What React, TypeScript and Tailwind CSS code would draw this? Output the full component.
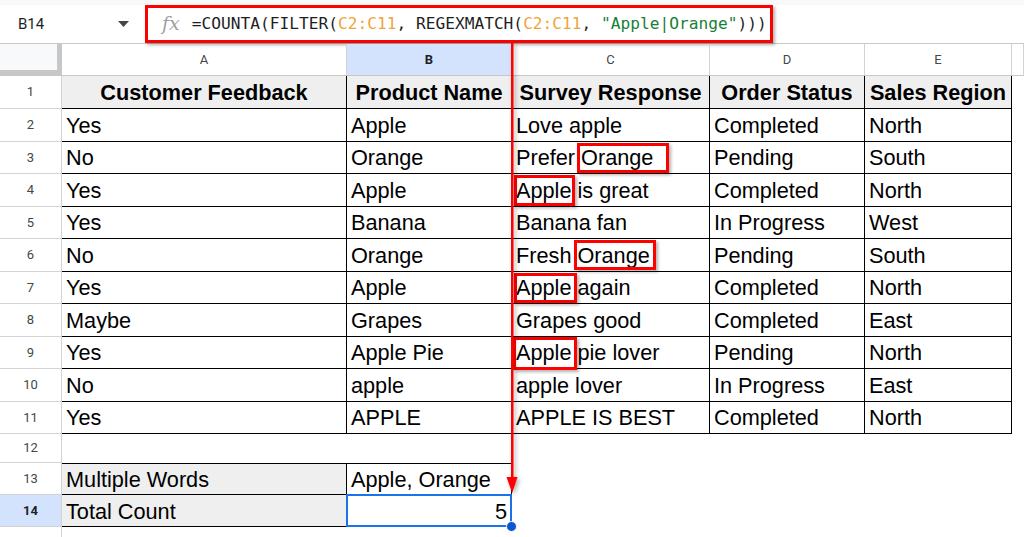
import React from "react";

const COL_W = ["w-[285px]", "w-[165px]", "w-[198px]", "w-[155px]", "w-[147px]"];
const LETTERS = ["A", "B", "C", "D", "E", ""];
const HEAD_W = ["w-[285px]", "w-[165px]", "w-[198px]", "w-[155px]", "w-[147px]", "w-[12px]"];

const HEADERS = ["Customer Feedback", "Product Name", "Survey Response", "Order Status", "Sales Region"];

const ROWS: string[][] = [
  ["Yes", "Apple", "Love apple", "Completed", "North"],
  ["No", "Orange", "Prefer Orange", "Pending", "South"],
  ["Yes", "Apple", "Apple is great", "Completed", "North"],
  ["Yes", "Banana", "Banana fan", "In Progress", "West"],
  ["No", "Orange", "Fresh Orange", "Pending", "South"],
  ["Yes", "Apple", "Apple again", "Completed", "North"],
  ["Maybe", "Grapes", "Grapes good", "Completed", "East"],
  ["Yes", "Apple Pie", "Apple pie lover", "Pending", "North"],
  ["No", "apple", "apple lover", "In Progress", "East"],
  ["Yes", "APPLE", "APPLE IS BEST", "Completed", "North"],
];

// red annotation boxes in column C, keyed by sheet row number
const MARKS: Record<number, string> = {
  3: "left-[65px] top-[1.5px] w-[92px] h-[30px]",
  4: "left-[2px] top-[1px] w-[61px] h-[31px]",
  6: "left-[62px] top-[1px] w-[82px] h-[30px]",
  7: "left-[2px] top-[1.5px] w-[63px] h-[30px]",
  9: "left-[1px] top-[0.5px] w-[64px] h-[33px]",
};

const ROW_H = "h-[32.5px]";
const TXT = "text-[21.7px]";

function RowHead({ n, active = false, h }: { n: number; active?: boolean; h: string }) {
  return (
    <div
      className={`${h} w-[62px] shrink-0 flex items-center justify-center border-r border-b border-[#d3d3d3] text-[13px] ${
        active ? "bg-[#d3e3fd] font-bold text-[#1f1f1f]" : "bg-white text-[#444746]"
      }`}
      style={{ fontFamily: "Roboto, 'Liberation Sans', sans-serif" }}
    >
      {n}
    </div>
  );
}

function Cell({
  w,
  children,
  className = "",
}: {
  w: string;
  children?: React.ReactNode;
  className?: string;
}) {
  return (
    <div className={`${w} shrink-0 relative flex items-center px-[4px] pt-[3px] whitespace-nowrap ${className}`}>
      {children}
    </div>
  );
}

export default function App() {
  return (
    <div
      className="relative w-[1024px] h-[537px] overflow-hidden bg-white text-black"
      style={{ fontFamily: "'Liberation Sans', Arial, sans-serif" }}
    >
      {/* formula bar */}
      <div className="h-[44px] border-b border-[#c7c7c7] flex flex-col">
        <div className="h-[5px] bg-[#f8f9fa]" />
        <div className="h-[38px] flex">
          <div
            className="w-[145px] flex items-center justify-between pl-[18px] pr-[16px] text-[15px] text-[#1f1f1f]"
            style={{ fontFamily: "Roboto, 'Liberation Sans', sans-serif" }}
          >
            <span>B14</span>
            <svg width="11" height="6" viewBox="0 0 11 6">
              <path d="M0 0 L11 0 L5.5 6 Z" fill="#444746" />
            </svg>
          </div>
          <div className="w-[628px] h-full border-[3px] border-[#ff0000] flex items-center pl-[14px] shadow-[2px_2px_3px_rgba(0,0,0,0.3)]">
            <span
              className="italic text-[19px] text-[#a0a0a0] mr-[12px] -mt-[2px]"
              style={{ fontFamily: "'DejaVu Serif', 'Liberation Serif', serif" }}
            >
              fx
            </span>
            <span
              className="text-[16.2px] text-[#1f1f1f] whitespace-pre"
              style={{ fontFamily: "'DejaVu Sans Mono', 'Liberation Mono', monospace" }}
            >
              =COUNTA(FILTER(<span className="text-[#f0a53c]">C2:C11</span>, REGEXMATCH(
              <span className="text-[#f0a53c]">C2:C11</span>,{" "}
              <span className="text-[#188038]">"Apple|Orange"</span>)))
            </span>
          </div>
          <div className="flex-1" />
        </div>
      </div>

      {/* column headers */}
      <div className="h-[32px] flex border-b border-[#c7c7c7]">
        <div className="w-[62px] shrink-0 bg-[#f8f9fa] border-r-[5px] border-b-[5px] border-[#c7c7c7]" />
        {LETTERS.map((l, i) => (
          <div
            key={i}
            className={`shrink-0 flex items-center justify-center border-r border-[#d3d3d3] text-[13px] ${
              i === 1 ? "bg-[#d3e3fd] font-bold text-[#1f1f1f]" : "text-[#444746]"
            } ${HEAD_W[i]}`}
            style={{ fontFamily: "Roboto, 'Liberation Sans', sans-serif" }}
          >
            {l}
          </div>
        ))}
      </div>

      {/* row 1: headers */}
      <div className="flex h-[33px]">
        <RowHead n={1} h="h-[33px]" />
        {HEADERS.map((t, i) => (
          <Cell
            key={t}
            w={COL_W[i]}
            className={`justify-center bg-[#efefef] border-r border-b border-black ${TXT} font-bold`}
          >
            {t}
          </Cell>
        ))}
      </div>

      {/* rows 2-11 */}
      {ROWS.map((r, ri) => {
        const n = ri + 2;
        return (
          <div key={n} className={`flex ${ROW_H}`}>
            <RowHead n={n} h={ROW_H} />
            {r.map((t, ci) => (
              <Cell key={ci} w={COL_W[ci]} className={`border-r border-b border-black ${TXT}`}>
                {t}
                {ci === 2 && MARKS[n] && (
                  <div
                    className={`absolute ${MARKS[n]} border-[3px] border-[#ff0000] shadow-[2px_2px_3px_rgba(0,0,0,0.3)]`}
                  />
                )}
              </Cell>
            ))}
          </div>
        );
      })}

      {/* row 12 */}
      <div className="flex h-[29px]">
        <RowHead n={12} h="h-[29px]" />
      </div>

      {/* row 13 */}
      <div className="flex h-[32px]">
        <RowHead n={13} h="h-[32px]" />
        <Cell w={COL_W[0]} className={`bg-[#efefef] border-t border-r border-b border-black ${TXT}`}>
          Multiple Words
        </Cell>
        <Cell w={COL_W[1]} className={`border-t border-r border-b border-black ${TXT}`}>
          Apple, Orange
        </Cell>
      </div>

      {/* row 14 */}
      <div className="flex h-[32px]">
        <RowHead n={14} active h="h-[32px]" />
        <Cell w={COL_W[0]} className={`bg-[#efefef] border-r border-b border-black ${TXT}`}>
          Total Count
        </Cell>
        <Cell w={COL_W[1]} className={`justify-end border-r border-b border-black ${TXT}`}>
          5
          <div className="absolute -left-[1px] -top-[1px] -right-[1px] -bottom-[1px] border-2 border-[#1a73e8]" />
          <div className="absolute -right-[6px] -bottom-[6px] w-[11px] h-[11px] rounded-full bg-[#0b57d0] border border-white" />
        </Cell>
      </div>

      {/* row 15 */}
      <div className="flex h-[32px]">
        <RowHead n={15} h="h-[32px]" />
      </div>

      {/* arrow from formula to result */}
      <svg
        className="absolute left-0 top-0 pointer-events-none drop-shadow-[2px_2px_2px_rgba(0,0,0,0.3)]"
        width="1024"
        height="537"
      >
        <rect x="511" y="43" width="2.5" height="436" fill="#ff0000" />
        <path d="M506.5 477 L517.5 477 L512.2 493 Z" fill="#ff0000" />
      </svg>
    </div>
  );
}
